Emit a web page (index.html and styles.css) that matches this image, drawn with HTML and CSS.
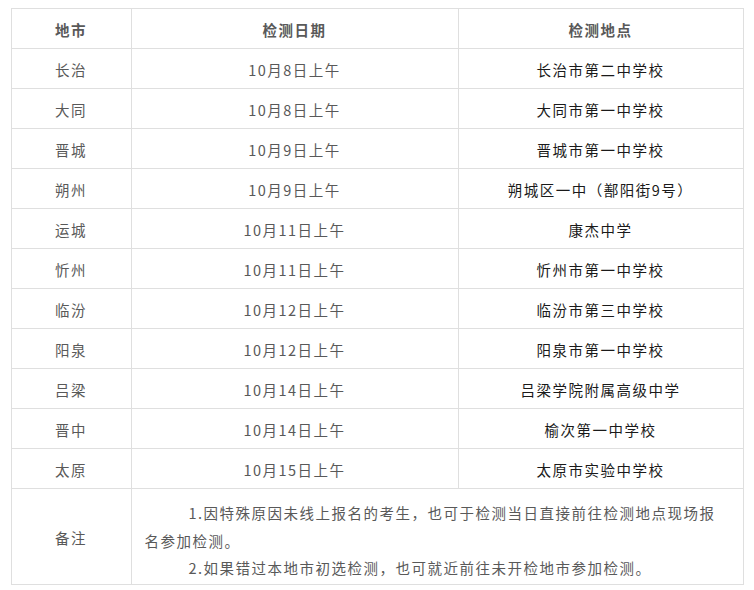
FILE: index.html
```html
<!DOCTYPE html>
<html lang="zh-CN">
<head>
<meta charset="utf-8">
<title>检测安排</title>
<link rel="stylesheet" href="styles.css">
</head>
<body>
<table class="sched">
  <colgroup>
    <col class="c1"><col class="c2"><col class="c3">
  </colgroup>
  <thead>
    <tr><th>地市</th><th>检测日期</th><th>检测地点</th></tr>
  </thead>
  <tbody>
    <tr><td class="city">长治</td><td class="date">10月8日上午</td><td class="place">长治市第二中学校</td></tr>
    <tr><td class="city">大同</td><td class="date">10月8日上午</td><td class="place">大同市第一中学校</td></tr>
    <tr><td class="city">晋城</td><td class="date">10月9日上午</td><td class="place">晋城市第一中学校</td></tr>
    <tr><td class="city">朔州</td><td class="date">10月9日上午</td><td class="place">朔城区一中（鄯阳街9号）</td></tr>
    <tr><td class="city">运城</td><td class="date">10月11日上午</td><td class="place">康杰中学</td></tr>
    <tr><td class="city">忻州</td><td class="date">10月11日上午</td><td class="place">忻州市第一中学校</td></tr>
    <tr><td class="city">临汾</td><td class="date">10月12日上午</td><td class="place">临汾市第三中学校</td></tr>
    <tr><td class="city">阳泉</td><td class="date">10月12日上午</td><td class="place">阳泉市第一中学校</td></tr>
    <tr><td class="city">吕梁</td><td class="date">10月14日上午</td><td class="place">吕梁学院附属高级中学</td></tr>
    <tr><td class="city">晋中</td><td class="date">10月14日上午</td><td class="place">榆次第一中学校</td></tr>
    <tr><td class="city">太原</td><td class="date">10月15日上午</td><td class="place">太原市实验中学校</td></tr>
    <tr class="remark-row">
      <td class="city">备注</td>
      <td class="remark" colspan="2">
        <p class="note">1.因特殊原因未线上报名的考生，也可于检测当日直接前往检测地点现场报名参加检测。</p>
        <p class="note">2.如果错过本地市初选检测，也可就近前往未开检地市参加检测。</p>
      </td>
    </tr>
  </tbody>
</table>
</body>
</html>
```

FILE: styles.css
```css
html, body {
  background: #ffffff;
}
body {
  margin: 8px;
  font-family: "Noto Sans CJK SC", "Noto Sans", sans-serif;
  font-size: 14.5px;
  color: #595959;
}
.sched {
  width: 732px;
  margin: 0 auto;
  border-collapse: collapse;
  table-layout: fixed;
  border: 1px solid #dfdfdf;
}
.c1 { width: 120px; }
.c2 { width: 327px; }
.c3 { width: 285px; }
.sched th,
.sched td {
  border: 1px solid #dfdfdf;
  height: 40px;
  padding: 3px 0 0 0;
  box-sizing: border-box;
  text-align: center;
  vertical-align: middle;
  letter-spacing: 1.5px;
  line-height: 20px;
}
.sched th {
  font-weight: bold;
  color: #595959;
}
.city, .date {
  color: #595959;
}
.place {
  color: #1a1a1a;
}
.remark-row td {
  height: 94px;
}
.remark {
  text-align: left !important;
  padding: 10px 24px 2px 13px !important;
  color: #595959;
}
.note {
  margin: 0;
  line-height: 27.5px;
  text-indent: 44px;
}
```
